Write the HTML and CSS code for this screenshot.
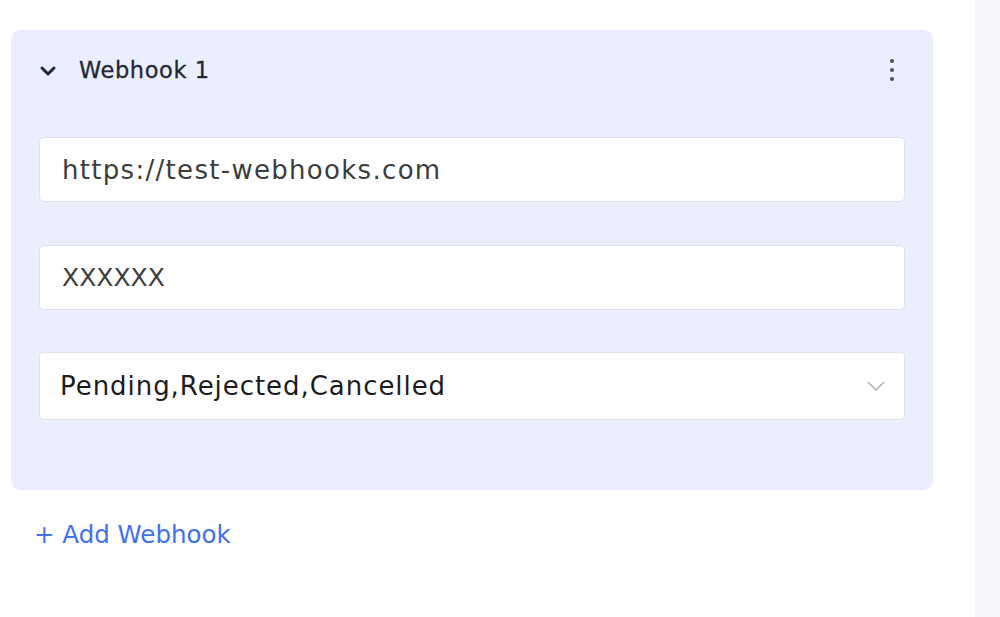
FILE: index.html
```html
<!DOCTYPE html>
<html lang="en">
<head>
<meta charset="utf-8">
<title>Webhooks</title>
<link rel="stylesheet" href="styles.css">
</head>
<body>
<div class="page">
  <main class="main">
    <section class="card">
      <header class="card-head">
        <div class="head-left">
          <svg class="caret" width="18" height="12" viewBox="0 0 18 12"><path d="M3 3 L9 9 L15 3" fill="none" stroke="#1f2937" stroke-width="3" stroke-linecap="round" stroke-linejoin="round"/></svg>
          <span class="title">Webhook 1</span>
        </div>
        <button class="kebab" aria-label="More">
          <span class="dot"></span><span class="dot"></span><span class="dot"></span>
        </button>
      </header>
      <div class="fields">
        <div class="field"><span class="value url">https://test-webhooks.com</span></div>
        <div class="field"><span class="value">XXXXXX</span></div>
        <div class="field select"><span class="value dark">Pending,Rejected,Cancelled</span>
          <svg class="sel-caret" width="20" height="14" viewBox="0 0 20 14"><path d="M2 3 L10 11 L18 3" fill="none" stroke="#b4b4b8" stroke-width="1.6"/></svg>
        </div>
      </div>
    </section>
    <a class="add-link" href="#">+ Add Webhook</a>
  </main>
  <aside class="side"></aside>
</div>
</body>
</html>
```
FILE: styles.css
```css
* { box-sizing: border-box; }
html, body { margin: 0; height: 100%; }
body { font-family: "DejaVu Sans", "Open Sans", sans-serif; background: #fff; }
.page { display: flex; height: 617px; overflow: hidden; }
.main { width: 975px; padding: 30px 42px 0 11px; background: #fff; }
.side { flex: 1; background: #f5f6fa; }
.card { background: #ebeffd; border-radius: 10px; height: 460px; padding: 0 28px; }
.card-head { height: 80px; display: flex; align-items: center; justify-content: space-between; }
.head-left { display: flex; align-items: center; gap: 22px; }
.caret { display: block; margin-left: 0; margin-top: 2px; }
.title { font-size: 22.5px; color: #1f2837; letter-spacing: 0.6px; -webkit-text-stroke: 0.3px #1f2837; }
.kebab { border: 0; background: transparent; padding: 0; width: 8px; margin-right: 9px; display: flex; flex-direction: column; align-items: center; gap: 5px; }
.dot { width: 4px; height: 4px; border-radius: 50%; background: #4a4f5c; }
.fields { display: flex; flex-direction: column; gap: 43px; margin-top: 27px; }
.field { height: 65px; background: #fff; border: 1.5px solid #dfe2ea; border-radius: 5px; display: flex; align-items: center; padding: 0 22px; }
.field.select { height: 68px; justify-content: space-between; padding: 0 18px 0 20px; margin-top: -1px; }
.value { font-size: 25px; color: #3c3d40; }
.value.url { font-size: 26px; letter-spacing: 1.3px; }
.value.dark { color: #1c1c1e; font-size: 26px; letter-spacing: 0.95px; }
.sel-caret { display: block; }
.add-link { display: inline-block; margin: 30px 0 0 23px; font-size: 24.5px; color: #4270ef; text-decoration: none; }
```
